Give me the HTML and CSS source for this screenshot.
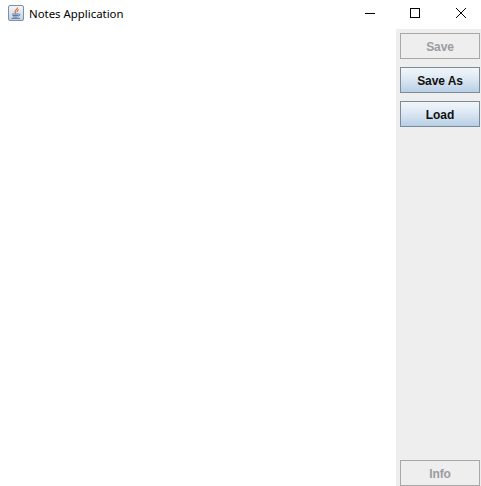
FILE: index.html
```html
<!DOCTYPE html>
<html lang="en">
<head>
<meta charset="utf-8">
<title>Notes Application</title>
<link rel="stylesheet" href="styles.css">
</head>
<body>
<div class="window">
  <header class="titlebar">
    <svg class="app-icon" width="16" height="16" viewBox="0 0 16 16" aria-hidden="true">
      <defs>
        <linearGradient id="tile" x1="0" y1="0" x2="0" y2="1">
          <stop offset="0" stop-color="#f4f7fb"/>
          <stop offset="1" stop-color="#c3d0e0"/>
        </linearGradient>
      </defs>
      <rect x="0.5" y="0.5" width="15" height="15" rx="1.5" fill="url(#tile)" stroke="#7f8ea3"/>
      <path d="M9.5 2.5C10 4 7 5 7 6.5c0 .8.6 1.3 1 1.8M10.5 4.5C9.5 5.3 8.8 5.8 9 7" fill="none" stroke="#e0661c" stroke-width="1.1"/>
      <path d="M4 9h6.5M4.5 10.5h5.5M5 12h4.5M3.5 13.4h8.5M10.5 9.2c2 -.4 2 1.6 -.5 1.8" fill="none" stroke="#4a6f9f" stroke-width="0.9"/>
    </svg>
    <span class="title">Notes Application</span>
    <div class="controls">
      <span class="control">
        <svg width="10" height="10" viewBox="0 0 10 10" aria-hidden="true"><path d="M0 5.5H10" stroke="#000" fill="none"/></svg>
      </span>
      <span class="control">
        <svg width="10" height="10" viewBox="0 0 10 10" aria-hidden="true"><rect x="0.5" y="0.5" width="9" height="9" stroke="#000" fill="none"/></svg>
      </span>
      <span class="control">
        <svg width="10" height="10" viewBox="0 0 10 10" aria-hidden="true"><path d="M0 0L10 10M10 0L0 10" stroke="#000" stroke-width="1" fill="none"/></svg>
      </span>
    </div>
  </header>
  <main class="content">
    <div class="editor"></div>
    <aside class="sidebar">
      <button class="btn" disabled>Save</button>
      <button class="btn">Save As</button>
      <button class="btn">Load</button>
      <button class="btn btn-bottom" disabled>Info</button>
    </aside>
  </main>
</div>
</body>
</html>
```
FILE: styles.css
```css
html, body {
  margin: 0;
  padding: 0;
  height: 100%;
  background: #fff;
}
.window {
  display: flex;
  flex-direction: column;
  height: 100%;
  overflow: hidden;
}
.titlebar {
  display: flex;
  align-items: center;
  height: 26px;
  padding-bottom: 3px;
  flex: none;
  padding-left: 8px;
  background: #fff;
}
.app-icon {
  flex: none;
  margin-right: 5px;
}
.title {
  font: 11.4px "Noto Sans", "Liberation Sans", sans-serif;
  color: #000;
}
.controls {
  display: flex;
  gap: 5px;
  margin-left: auto;
}
.control {
  display: flex;
  align-items: center;
  justify-content: center;
  width: 40px;
  height: 26px;
}
.control:last-child {
  margin-left: 1px;
}
.content {
  display: flex;
  flex: 1;
  min-height: 0;
}
.editor {
  flex: 1;
  background: #fff;
}
.sidebar {
  display: flex;
  flex-direction: column;
  gap: 8px;
  flex: none;
  width: 80px;
  padding: 4px 1px 0 4px;
  background: #eeeeee;
}
.btn {
  display: block;
  width: 80px;
  height: 26px;
  padding: 1px 0 0;
  box-sizing: border-box;
  border: 1px solid #7a8a99;
  background: linear-gradient(#f2f6fa 0%, #dde8f3 45%, #b8cfe5 100%);
  font: bold 12px "Liberation Sans", Arial, sans-serif;
  letter-spacing: -0.1px;
  color: #111;
}
.btn:disabled {
  border-color: #a8a8a8;
  background: #eeeeee;
  color: #9a9ca0;
}
.btn-bottom {
  margin-top: auto;
}
```
